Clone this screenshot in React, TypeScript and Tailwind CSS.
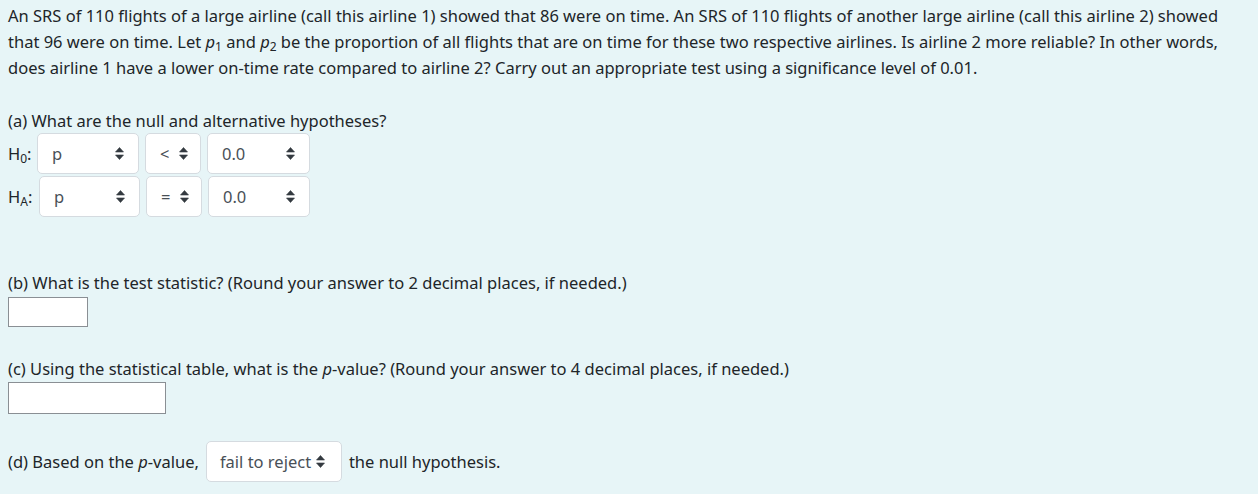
import React from "react";

function SortIcon() {
  return (
    <svg width="9" height="13" viewBox="0 0 9 13" className="shrink-0">
      <path d="M4.5 0.5 L8.5 5 L0.5 5 Z" fill="#343a40" strokeLinejoin="round" stroke="#343a40" strokeWidth="0.6" />
      <path d="M0.5 8 L8.5 8 L4.5 12.5 Z" fill="#343a40" strokeLinejoin="round" stroke="#343a40" strokeWidth="0.6" />
    </svg>
  );
}

function Select({ value, width, pl = "pl-[14px]", pr = "pr-[14px]" }: { value: string; width: string; pl?: string; pr?: string }) {
  return (
    <div className={`flex h-[41px] items-center justify-between rounded-[5px] border border-[#d5dbe0] bg-white ${width} ${pl} ${pr} text-[#495057]`}>
      <span>{value}</span>
      <SortIcon />
    </div>
  );
}

export default function App() {
  return (
    <div
      className="min-h-screen w-full bg-[#e7f5f7] px-2 pt-[3px] text-[16.5px] leading-[26px] text-[#212529]"
      style={{ fontFamily: '"Segoe UI", "Noto Sans", "Open Sans", sans-serif' }}
    >
      <p className="pr-[18px]">
        An SRS of 110 flights of a large airline (call this airline 1) showed that 86 were on time. An SRS of 110 flights of another large airline (call this airline 2) showed that 96 were on time. Let <i>p</i>
        <sub className="text-[12px] leading-[0]">1</sub> and <i>p</i>
        <sub className="text-[12px] leading-[0]">2</sub> be the proportion of all flights that are on time for these two respective airlines. Is airline 2 more reliable? In other words, does airline 1 have a lower on-time rate compared to airline 2? Carry out an appropriate test using a significance level of 0.01.
      </p>

      <p className="mt-[27px]">(a) What are the null and alternative hypotheses?</p>
      <div className="-mt-px flex flex-col gap-[2px]">
        <div className="flex items-center gap-[6px]">
          <span className="w-[23px]">
            H<sub className="text-[12px] leading-[0]">0</sub>:
          </span>
          <div className="flex gap-[6px]">
            <Select value="p" width="w-[102px]" />
            <Select value="<" width="w-[56px]" pr="pr-[12px]" />
            <Select value="0.0" width="w-[103px]" />
          </div>
        </div>
        <div className="flex items-center gap-[6px]">
          <span className="w-[25px]">
            H<sub className="text-[12px] leading-[0]">A</sub>:
          </span>
          <div className="flex gap-[6px]">
            <Select value="p" width="w-[101px]" />
            <Select value="=" width="w-[56px]" pr="pr-[12px]" />
            <Select value="0.0" width="w-[102px]" />
          </div>
        </div>
      </div>

      <p className="mt-[53px]">(b) What is the test statistic? (Round your answer to 2 decimal places, if needed.)</p>
      <div className="mt-px h-[30px] w-[80px] border border-[#8a8f94] bg-white" />

      <p className="mt-[29px]">
        (c) Using the statistical table, what is the <i>p</i>-value? (Round your answer to 4 decimal places, if needed.)
      </p>
      <div className="h-[32px] w-[158px] border border-[#8a8f94] bg-white" />

      <div className="mt-[27px] flex items-center gap-[7px]">
        <span>
          (d) Based on the <i>p</i>-value,
        </span>
        <Select value="fail to reject" width="w-[136px]" pl="pl-[13px]" pr="pr-[16px]" />
        <span>the null hypothesis.</span>
      </div>
    </div>
  );
}
